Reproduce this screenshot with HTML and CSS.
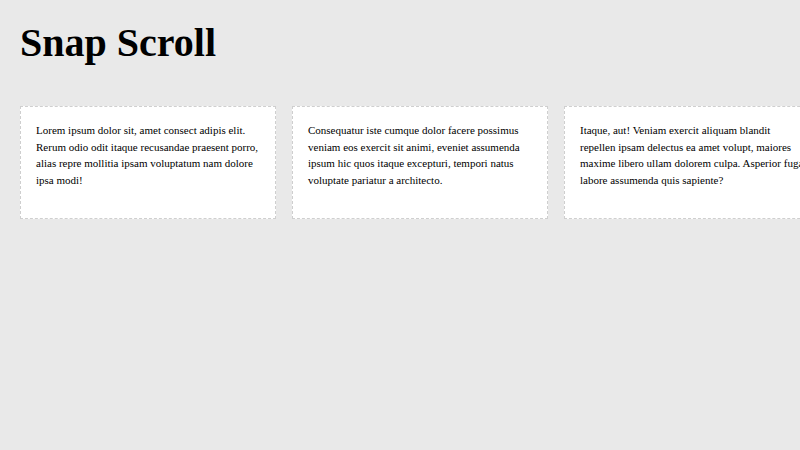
FILE: index.html
```html
<!DOCTYPE html>
<html lang="en">
<head>
<meta charset="utf-8">
<title>Snap Scroll</title>
<link rel="stylesheet" href="styles.css">
</head>
<body>
  <h1 class="title">Snap Scroll</h1>
  <div class="track">
    <div class="card"><p>Lorem ipsum dolor sit, amet consect adipis elit. Rerum odio odit itaque recusandae praesent porro, alias repre mollitia ipsam voluptatum nam dolore ipsa modi!</p></div>
    <div class="card"><p>Consequatur iste cumque dolor facere possimus veniam eos exercit sit animi, eveniet assumenda ipsum hic quos itaque excepturi, tempori natus voluptate pariatur a architecto.</p></div>
    <div class="card"><p>Itaque, aut! Veniam exercit aliquam blandit repellen ipsam delectus ea amet volupt, maiores maxime libero ullam dolorem culpa. Asperior fuga labore assumenda quis sapiente?</p></div>
    <div class="card"><p>Nostrum quas dolorem, cumque sequi voluptas facilis eius, ratione illum sint quidem a ducimus laborum odit.</p></div>
  </div>
</body>
</html>
```
FILE: styles.css
```css
html, body {
  margin: 0;
  background: #e9e9e9;
}

body {
  padding: 20px 0 20px 20px;
  font-family: "Liberation Serif", "Times New Roman", serif;
  color: #000;
}

.title {
  margin: 0 0 40px;
  font-size: 40px;
  line-height: 46px;
  font-weight: bold;
}

/* horizontal strip of cards, snapping to each card's left edge */
.track {
  display: flex;
  gap: 16px;
  overflow-x: auto;
  scroll-snap-type: x mandatory;
  scrollbar-width: none;
}

.card {
  flex: 0 0 256px;
  box-sizing: border-box;
  height: 113px;
  padding: 15px;
  background: #fff;
  border: 1px dashed #cfcfcf;
  scroll-snap-align: start;
}

.card p {
  margin: 0;
  font-size: 11px;
  line-height: 16.5px;
}
```
